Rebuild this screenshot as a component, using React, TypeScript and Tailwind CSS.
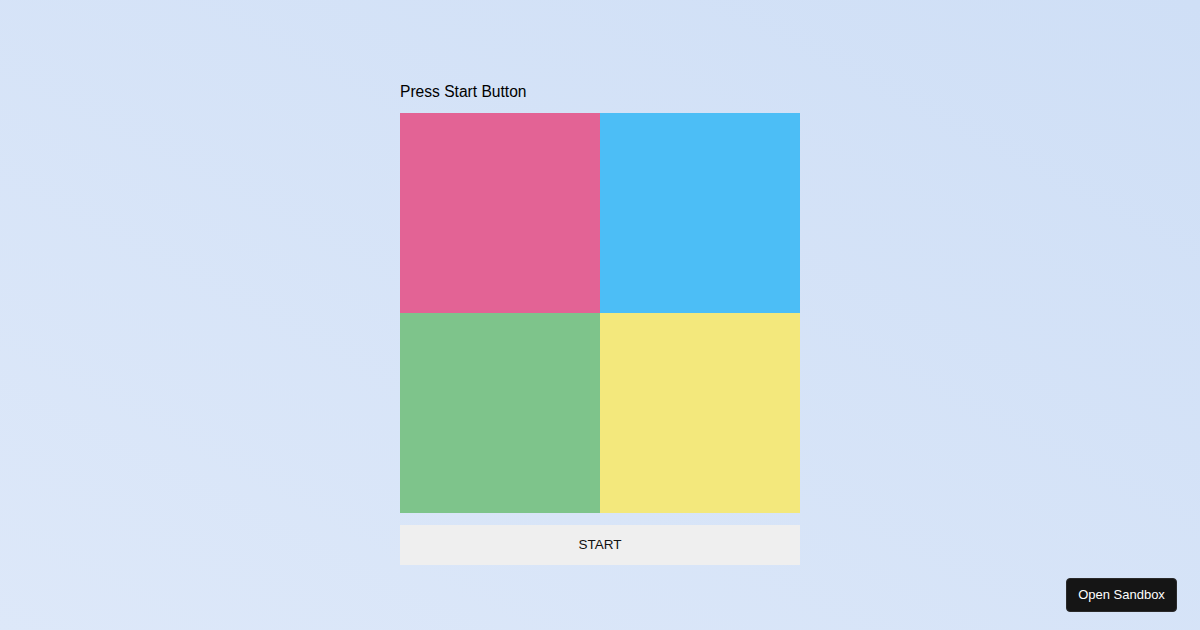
export default function App() {
  return (
    <div className="relative h-[630px] w-[1200px] overflow-hidden bg-gradient-to-tr from-[#dde8f9] to-[#cfdff6] font-['Liberation_Sans',Arial,sans-serif]">
      <div className="mx-auto flex w-[400px] flex-col pt-[83px]">
        <h1 className="mb-[12px] text-[15.6px] leading-[18px] text-black">Press Start Button</h1>
        <div className="grid h-[400px] grid-cols-2 grid-rows-2">
          <div className="bg-[#e36395]" />
          <div className="bg-[#4cbef6]" />
          <div className="bg-[#7ec48b]" />
          <div className="bg-[#f3e87c]" />
        </div>
        <button
          type="button"
          className="mt-[12px] h-[40px] w-full bg-[#efefef] text-[13.5px] text-[#111]"
        >
          START
        </button>
      </div>
      <button
        type="button"
        className="absolute bottom-[18px] right-[23px] h-[34px] w-[111px] rounded-[4px] border border-[#2a2a2a] bg-[#151515] text-[13px] text-white"
      >
        Open Sandbox
      </button>
    </div>
  );
}
